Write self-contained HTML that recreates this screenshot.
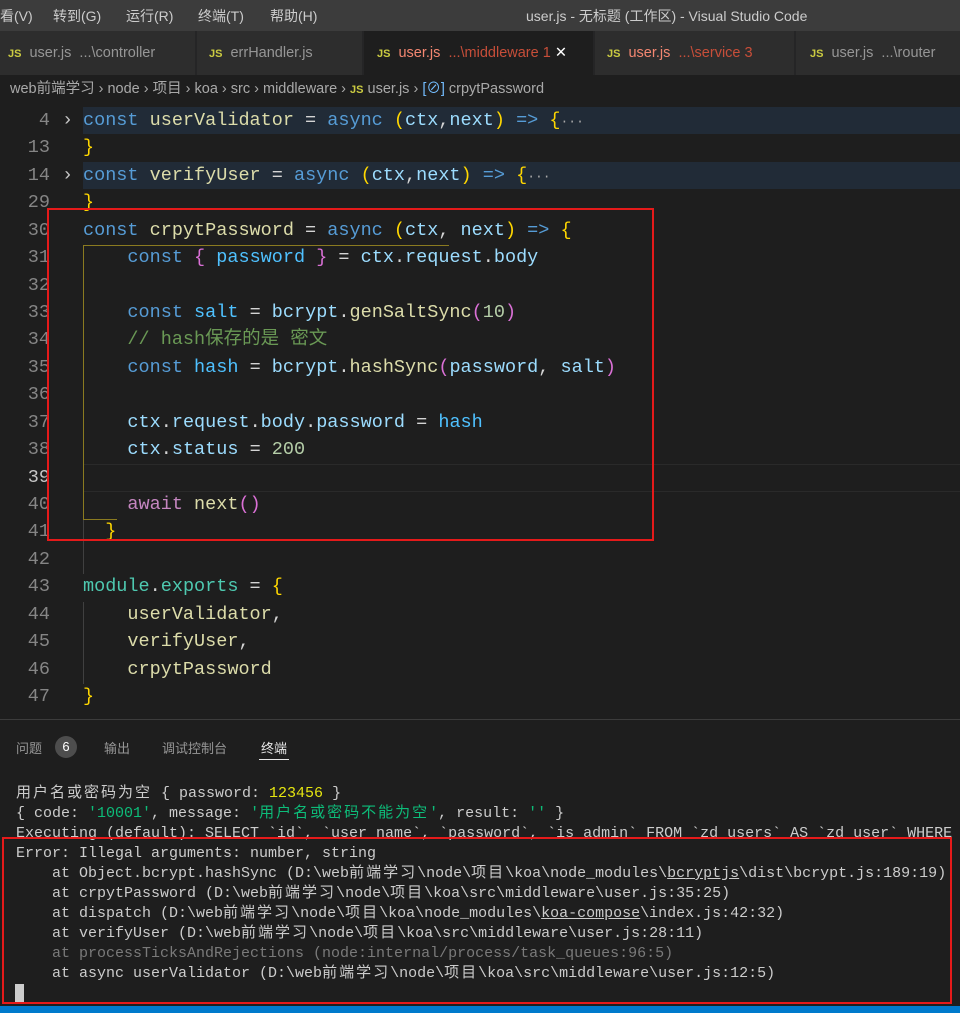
<!DOCTYPE html>
<html><head><meta charset="utf-8">
<style>
*{margin:0;padding:0;box-sizing:border-box}
body{width:960px;height:1013px;background:#1e1e1e;position:relative;overflow:hidden;font-family:"Liberation Sans","Noto Sans CJK SC",sans-serif}
.abs{position:absolute;white-space:pre}
#title{left:0;top:0;width:960px;height:31px;background:#3c3c3c;color:#ccc;font-size:14px}
#tabs{left:0;top:31px;width:960px;height:44px;background:#252526}
.tab{position:absolute;top:0;height:44px;background:#2d2d2d;border-right:1px solid #252526;font-size:14.5px;color:#969696;line-height:44px;padding-left:8px}
.tab b{color:#cbcb41;font-size:11px;font-weight:bold;margin-right:8px}
#bc{left:0;top:75px;width:960px;height:28px;background:#1e1e1e;color:#a9a9a9;font-size:14.5px;line-height:28px;padding-left:10px}
.code{font-family:"Liberation Mono","Noto Sans CJK SC",monospace;font-size:18.5px;line-height:27.4px;color:#d4d4d4}
.ln{position:absolute;left:0;width:50px;text-align:right;color:#858585}
.cl{position:absolute;left:83px}
.k{color:#569cd6}.v{color:#9cdcfe}.f{color:#dcdcaa}.y{color:#ffd700}.p{color:#da70d6}.b{color:#179fff}.c{color:#6a9955}.n{color:#b5cea8}.m{color:#c586c0}.t{color:#4ec9b0}.cv{color:#4fc1ff}
.term{font-family:"Liberation Mono","Noto Sans CJK SC",monospace;font-size:15px;line-height:20px;color:#ccc}
.z{letter-spacing:2px}
</style></head><body>
<div id="title" class="abs"><span class="abs" style="left:0;top:6px">看(V)</span><span class="abs" style="left:53px;top:6px">转到(G)</span><span class="abs" style="left:126px;top:6px">运行(R)</span><span class="abs" style="left:198px;top:6px">终端(T)</span><span class="abs" style="left:270px;top:6px">帮助(H)</span><span class="abs" style="left:526px;top:6px">user.js - 无标题 (工作区) - Visual Studio Code</span></div>
<div id="tabs" class="abs">
<div class="tab" style="left:0;width:196px"><b>JS</b>user.js &nbsp;...\controller</div>
<div class="tab" style="left:197px;width:166px;padding-left:12px"><b>JS</b>errHandler.js</div>
<div class="tab" style="left:364px;width:230px;background:#1e1e1e;color:#f48771;padding-left:13px"><b>JS</b>user.js &nbsp;<span style="color:#c74e39">...\middleware 1</span> <span style="color:#fff">✕</span></div>
<div class="tab" style="left:595px;width:200px;color:#f48771;padding-left:12px"><b>JS</b>user.js &nbsp;<span style="color:#c74e39">...\service 3</span></div>
<div class="tab" style="left:796px;width:170px;padding-left:14px"><b>JS</b>user.js &nbsp;...\router</div>
</div>
<div id="bc" class="abs">web前端学习 › node › 项目 › koa › src › middleware › <span style="color:#cbcb41;font-size:11px;font-weight:bold">JS</span> user.js › <span style="color:#75beff">[⊘]</span> crpytPassword</div>

<div class="abs" style="left:83px;top:107px;width:877px;height:27px;background:#212b37"></div>
<div class="abs" style="left:83px;top:162px;width:877px;height:27px;background:#212b37"></div>
<div class="abs" style="left:83px;top:464px;width:877px;height:28px;border-top:1px solid #2a2a2a;border-bottom:1px solid #2a2a2a"></div>
<div class="abs" style="left:83px;top:245px;width:366px;height:1px;background:#8a7a20"></div>
<div class="abs" style="left:83px;top:245px;width:1px;height:274px;background:#8a7a20"></div>
<div class="abs" style="left:83px;top:519px;width:34px;height:1px;background:#8a7a20"></div>
<div class="abs" style="left:83px;top:520px;width:1px;height:54px;background:#404040"></div>
<div class="abs" style="left:83px;top:602px;width:1px;height:82px;background:#404040"></div>

<div class="abs code" style="left:0;top:107px;width:960px;height:610px">
<div class="ln" style="top:0">4</div><div class="abs" style="left:62px;top:0;color:#c5c5c5">›</div><div class="cl" style="top:0"><span class="k">const</span> <span class="f">userValidator</span> = <span class="k">async</span> <span class="y">(</span><span class="v">ctx</span>,<span class="v">next</span><span class="y">)</span> <span class="k">=&gt;</span> <span class="y">{</span><span style="color:#aaa;font-size:13px">···</span></div>
<div class="ln" style="top:27.4px">13</div><div class="cl" style="top:27.4px"><span class="y">}</span></div>
<div class="ln" style="top:54.9px">14</div><div class="abs" style="left:62px;top:54.9px;color:#c5c5c5">›</div><div class="cl" style="top:54.9px"><span class="k">const</span> <span class="f">verifyUser</span> = <span class="k">async</span> <span class="y">(</span><span class="v">ctx</span>,<span class="v">next</span><span class="y">)</span> <span class="k">=&gt;</span> <span class="y">{</span><span style="color:#aaa;font-size:13px">···</span></div>
<div class="ln" style="top:82.3px">29</div><div class="cl" style="top:82.3px"><span class="y">}</span></div>
<div class="ln" style="top:109.7px">30</div><div class="cl" style="top:109.7px"><span class="k">const</span> <span class="f">crpytPassword</span> = <span class="k">async</span> <span class="y">(</span><span class="v">ctx</span>, <span class="v">next</span><span class="y">)</span> <span class="k">=&gt;</span> <span class="y">{</span></div>
<div class="ln" style="top:137.2px">31</div><div class="cl" style="top:137.2px">    <span class="k">const</span> <span class="p">{</span> <span class="cv">password</span> <span class="p">}</span> = <span class="v">ctx</span>.<span class="v">request</span>.<span class="v">body</span></div>
<div class="ln" style="top:164.6px">32</div>
<div class="ln" style="top:192px">33</div><div class="cl" style="top:192px">    <span class="k">const</span> <span class="cv">salt</span> = <span class="v">bcrypt</span>.<span class="f">genSaltSync</span><span class="p">(</span><span class="n">10</span><span class="p">)</span></div>
<div class="ln" style="top:219.4px">34</div><div class="cl" style="top:219.4px">    <span class="c">// hash保存的是 密文</span></div>
<div class="ln" style="top:246.9px">35</div><div class="cl" style="top:246.9px">    <span class="k">const</span> <span class="cv">hash</span> = <span class="v">bcrypt</span>.<span class="f">hashSync</span><span class="p">(</span><span class="v">password</span>, <span class="v">salt</span><span class="p">)</span></div>
<div class="ln" style="top:274.3px">36</div>
<div class="ln" style="top:301.7px">37</div><div class="cl" style="top:301.7px">    <span class="v">ctx</span>.<span class="v">request</span>.<span class="v">body</span>.<span class="v">password</span> = <span class="cv">hash</span></div>
<div class="ln" style="top:329.2px">38</div><div class="cl" style="top:329.2px">    <span class="v">ctx</span>.<span class="v">status</span> = <span class="n">200</span></div>
<div class="ln" style="top:356.6px;color:#c6c6c6">39</div>
<div class="ln" style="top:384px">40</div><div class="cl" style="top:384px">    <span class="m">await</span> <span class="f">next</span><span class="p">()</span></div>
<div class="ln" style="top:411.4px">41</div><div class="cl" style="top:411.4px">  <span class="y">}</span></div>
<div class="ln" style="top:438.9px">42</div>
<div class="ln" style="top:466.3px">43</div><div class="cl" style="top:466.3px"><span class="t">module</span>.<span class="t">exports</span> = <span class="y">{</span></div>
<div class="ln" style="top:493.7px">44</div><div class="cl" style="top:493.7px">    <span class="f">userValidator</span>,</div>
<div class="ln" style="top:521.1px">45</div><div class="cl" style="top:521.1px">    <span class="f">verifyUser</span>,</div>
<div class="ln" style="top:548.6px">46</div><div class="cl" style="top:548.6px">    <span class="f">crpytPassword</span></div>
<div class="ln" style="top:576px">47</div><div class="cl" style="top:576px"><span class="y">}</span></div>
</div>
<div class="abs" style="left:47px;top:208px;width:607px;height:333px;border:2px solid #e51a1a"></div>

<div class="abs" style="left:0;top:719px;width:960px;height:1px;background:#3c3c3c"></div>
<div class="abs" style="left:16px;top:738px;font-size:13px;color:#969696">问题</div>
<div class="abs" style="left:55px;top:736px;width:22px;height:22px;border-radius:11px;background:#4d4d4d;color:#fff;font-size:13px;text-align:center;line-height:22px">6</div>
<div class="abs" style="left:104px;top:738px;font-size:13px;color:#969696">输出</div>
<div class="abs" style="left:162px;top:738px;font-size:13px;color:#969696">调试控制台</div>
<div class="abs" style="left:261px;top:738px;font-size:13px;color:#e7e7e7">终端</div>
<div class="abs" style="left:259px;top:759px;width:30px;height:1px;background:#e7e7e7"></div>

<div class="abs term" style="left:16px;top:784px"><span class="z">用户名或密码为空</span> { password: <span style="color:#e5e510">123456</span> }
{ code: <span style="color:#0dbc79">'10001'</span>, message: <span style="color:#0dbc79">'<span class="z">用户名或密码不能为空</span>'</span>, result: <span style="color:#0dbc79">''</span> }
Executing (default): SELECT `id`, `user_name`, `password`, `is_admin` FROM `zd_users` AS `zd_user` WHERE
Error: Illegal arguments: number, string
    at Object.bcrypt.hashSync (D:\web<span class="z">前端学习</span>\node\<span class="z">项目</span>\koa\node_modules\<u>bcryptjs</u>\dist\bcrypt.js:189:19)
    at crpytPassword (D:\web<span class="z">前端学习</span>\node\<span class="z">项目</span>\koa\src\middleware\user.js:35:25)
    at dispatch (D:\web<span class="z">前端学习</span>\node\<span class="z">项目</span>\koa\node_modules\<u>koa-compose</u>\index.js:42:32)
    at verifyUser (D:\web<span class="z">前端学习</span>\node\<span class="z">项目</span>\koa\src\middleware\user.js:28:11)
<span style="color:#7a7a7a">    at processTicksAndRejections (node:internal/process/task_queues:96:5)</span>
    at async userValidator (D:\web<span class="z">前端学习</span>\node\<span class="z">项目</span>\koa\src\middleware\user.js:12:5)</div>
<div class="abs" style="left:15px;top:984px;width:9px;height:19px;background:#ccc"></div>
<div class="abs" style="left:2px;top:837px;width:950px;height:167px;border:2px solid #e51a1a"></div>
<div class="abs" style="left:0;top:1006px;width:960px;height:7px;background:#007acc"></div>
</body></html>
